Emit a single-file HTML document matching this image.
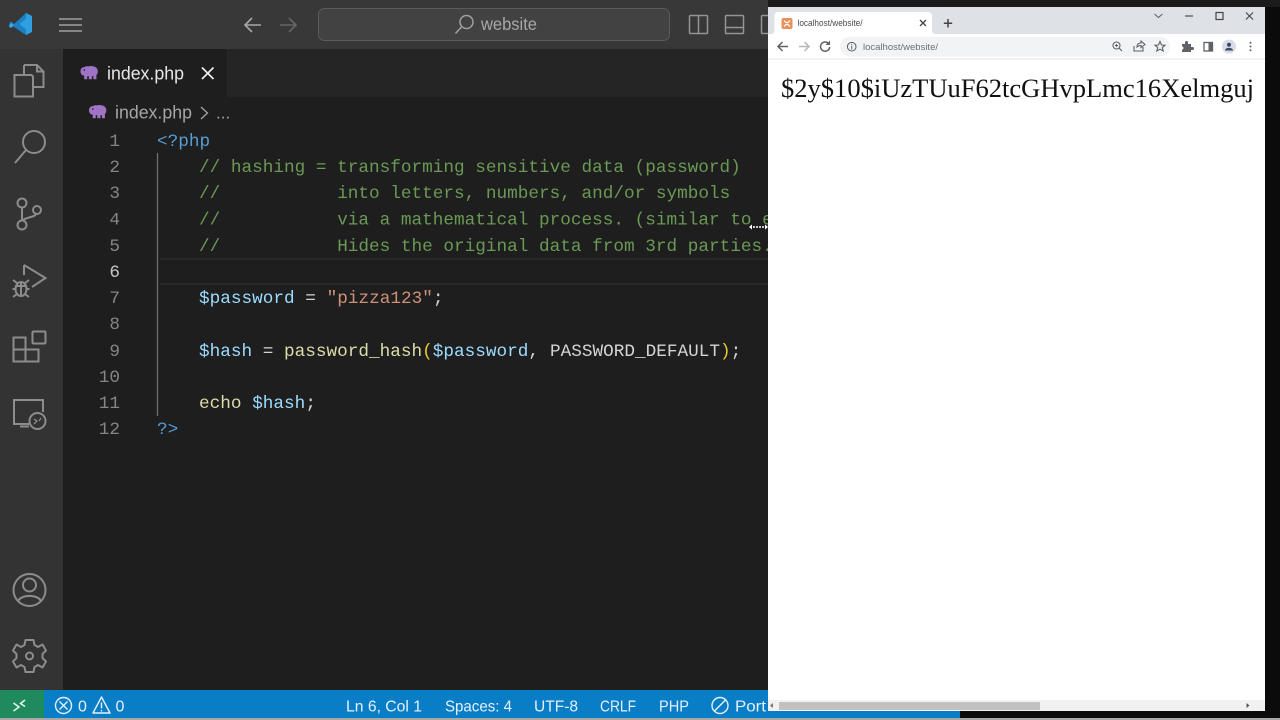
<!DOCTYPE html>
<html lang="en"><head><meta charset="utf-8"><title>index.php - website</title>
<style>
html,body{margin:0;padding:0;background:#000;width:1280px;height:720px;overflow:hidden}
svg{display:block}
.ui{font-family:"Liberation Sans",sans-serif}
.code{font-family:"Liberation Mono",monospace;font-size:17.72px}
.ln{font-family:"Liberation Mono",monospace;font-size:17.72px;fill:#858585;text-anchor:end}
.ic{fill:none;stroke:#8c8c8c;stroke-width:2}
.c{fill:#6a9955}.v{fill:#9cdcfe}.f{fill:#dcdcaa}.s{fill:#ce9178}.t{fill:#569cd6}.p{fill:#d4d4d4}.y{fill:#e8c92e}
.st{font-family:"Liberation Sans",sans-serif;font-size:16px;fill:#e4f1fa}
</style></head><body>
<svg width="1280" height="720" viewBox="0 0 1280 720" xmlns="http://www.w3.org/2000/svg">
<defs>
<g id="el"><path fill="#a074c4" d="M0 5.500C0 2.500 2 .8 4 1.200 5 .2 6.500 0 8 .4c1-.5 3-.7 5 0 3 .6 4.300 2.800 4.300 5.100 0 1.500-.5 2.700-1.400 3.500v4.200h-3v-3h-1.500v3H8.300v-3H6.700v3h-3V9.500C2.500 9.700 1.700 9.300 1.300 8.600.4 7.800 0 6.800 0 5.500z"/><circle cx="3.800" cy="4" r=".8" fill="#1e1e1e"/></g>
</defs>
<!-- base -->
<rect width="1280" height="720" fill="#0b0b0b"/>
<rect width="768" height="49" fill="#383838"/>
<rect x="768" width="512" height="7" fill="#1b1b1b"/>
<rect y="49" width="63" height="641" fill="#333"/>
<rect x="63" y="49" width="705" height="48" fill="#252526"/>
<rect x="63" y="49" width="164" height="48" fill="#1e1e1e"/>
<rect x="63" y="97" width="705" height="593" fill="#1e1e1e"/>
<rect y="690" width="960" height="28" fill="#0a7dc7"/>
<rect y="690" width="44" height="28" fill="#1f8a5b"/>
<rect y="718" width="1280" height="2" fill="#a8a8a8"/>

<!-- VS Code logo -->
<path fill="#2f9fe0" d="M26 13 32 16V32L26 35 15 25.200 26 13Z"/>
<path fill="#1d7fc4" d="M26 13 14 24 11 21.500 9 22.500 14 27 26 35 26 29.500 19.500 24 26 18.500Z"/>
<path fill="#3aa7e8" d="M9 26.500 11 28 14 25.200 11.500 23 9.500 24.200Z"/>
<!-- hamburger -->
<path stroke="#a0a0a0" stroke-width="1.600" fill="none" d="M59 19H82M59 25H82M59 31H82"/>
<!-- nav arrows -->
<path stroke="#a8a8a8" stroke-width="1.600" fill="none" d="M261 25H245M252 18l-7 7 7 7"/>
<path stroke="#666" stroke-width="1.600" fill="none" d="M280 25H296M289 18l7 7-7 7"/>
<!-- command center -->
<rect x="318.500" y="8.500" width="351" height="32" rx="6" fill="#424242" stroke="#5b5b5b"/>
<circle cx="466.500" cy="22" r="6.500" fill="none" stroke="#a0a0a0" stroke-width="1.500"/>
<path stroke="#a0a0a0" stroke-width="1.500" d="M461.500 27 455.500 33.500"/>
<text class="ui" x="481" y="30" font-size="17.500" fill="#a8a8a8" textLength="56" lengthAdjust="spacingAndGlyphs">website</text>
<!-- layout icons -->
<g fill="none" stroke="#949494" stroke-width="1.500">
<rect x="689.500" y="15.500" width="18" height="18" rx="1"/><path d="M698.500 15.500V33.500"/>
<rect x="725.500" y="15.500" width="18" height="18" rx="1"/><path d="M725.500 27.500H743.500"/>
<rect x="761.500" y="15.500" width="18" height="18" rx="1"/>
</g>

<!-- activity icons -->
<g class="ic">
<path d="M24 65H37L43.500 71.500V87H33M24 65V74M37 65V71.500H43.500"/>
<path d="M14.500 75H31.500L33 76.500V96.500H14.500Z"/>
<circle cx="34" cy="142" r="11"/><path d="M26 150 15 163"/>
<circle cx="22" cy="203" r="4.500"/><circle cx="22" cy="225" r="4.500"/><circle cx="37" cy="210" r="4"/>
<path d="M22 207.500V220.500M36 214C34 218 28 216 22.500 220.500"/>
<path d="M24 265 45.500 278 32 287M24 265V275"/>
<path d="M13 280 17 283M29 280 25 283M12.500 289H16M26 289H29.500M13 297 17 294M29 297 25 294"/>
<ellipse cx="21" cy="289" rx="5.500" ry="7"/><path d="M16 286H26M21 283V296"/>
<rect x="13.500" y="337.500" width="12" height="12"/><rect x="13.500" y="349.500" width="12" height="12"/><rect x="25.500" y="349.500" width="13" height="12"/>
<rect x="32.500" y="331.500" width="13" height="12" rx="1"/>
<path d="M29 424H14V400H43V412M20 426.500H29"/><circle cx="37.500" cy="421" r="8"/>
<path d="M34 424l3-3-3-2M41 418l-2 3" stroke-width="1.300"/>
<circle cx="29.500" cy="590" r="16"/><circle cx="29.500" cy="585" r="6.500"/><path d="M18 601.500C20 594 39 594 41 601.500"/>
<path d="M25.500 640H33.500L34.500 645 38 647 42.500 644.500 46 650.500 42.500 654V658L46 661.500 42.500 667.500 38 665 34.500 667 33.500 672H25.500L24.500 667 21 665 16.500 667.500 13 661.500 16.500 658V654L13 650.500 16.500 644.500 21 647 24.500 645Z" stroke-linejoin="round"/>
<circle cx="29.500" cy="656" r="3.500"/>
</g>

<!-- tab -->
<use href="#el" x="80.500" y="66"/>
<text class="ui" x="107" y="79.500" font-size="18" fill="#e6e6e6" textLength="77" lengthAdjust="spacingAndGlyphs">index.php</text>
<path stroke="#eee" stroke-width="1.700" d="M202 67.500 213.500 79M213.500 67.500 202 79"/>
<!-- breadcrumb -->
<use href="#el" x="89" y="105"/>
<text class="ui" x="115" y="118.500" font-size="18" fill="#a5a5a5" textLength="77" lengthAdjust="spacingAndGlyphs">index.php</text>
<path stroke="#a5a5a5" stroke-width="1.300" fill="none" d="M201 107 207.500 113 201 119"/>
<text class="ui" x="216" y="118.500" font-size="17" fill="#a5a5a5">...</text>

<!-- current line and indent guide -->
<path stroke="#282828" stroke-width="2" d="M160 259H768M160 284H768"/>
<path stroke="#6e6e6e" stroke-width="1.300" d="M157.500 153V416"/>

<!-- line numbers -->
<text class="ln" x="120" y="146">1</text>
<text class="ln" x="120" y="172">2</text>
<text class="ln" x="120" y="198">3</text>
<text class="ln" x="120" y="224.500">4</text>
<text class="ln" x="120" y="251">5</text>
<text class="ln" x="120" y="277" style="fill:#c6c6c6">6</text>
<text class="ln" x="120" y="303">7</text>
<text class="ln" x="120" y="329">8</text>
<text class="ln" x="120" y="356">9</text>
<text class="ln" x="120" y="382">10</text>
<text class="ln" x="120" y="408">11</text>
<text class="ln" x="120" y="434">12</text>

<!-- code -->
<g class="code">
<text x="157" y="146" class="t">&lt;?php</text>
<text x="199" y="172" class="c">// hashing = transforming sensitive data (password)</text>
<text y="198" class="c"><tspan x="199">//</tspan><tspan x="337.200">into letters, numbers, and/or symbols</tspan></text>
<text y="224.500" class="c"><tspan x="199">//</tspan><tspan x="337.200">via a mathematical process. (similar to encryption)</tspan></text>
<text y="251" class="c"><tspan x="199">//</tspan><tspan x="337.200">Hides the original data from 3rd parties.</tspan></text>
<text y="303"><tspan x="199" class="v">$password</tspan><tspan x="305.300" class="p">=</tspan><tspan x="326.600" class="s">"pizza123"</tspan><tspan class="p">;</tspan></text>
<text y="356"><tspan x="199" class="v">$hash</tspan><tspan x="262.800" class="p">=</tspan><tspan x="284" class="f">password_hash</tspan><tspan class="y">(</tspan><tspan class="v">$password</tspan><tspan class="p">,</tspan><tspan x="550" class="p">PASSWORD_DEFAULT</tspan><tspan class="y">)</tspan><tspan class="p">;</tspan></text>
<text y="408"><tspan x="199" class="f">echo</tspan><tspan x="252.200" class="v">$hash</tspan><tspan class="p">;</tspan></text>
<text x="157" y="434" class="t">?&gt;</text>
</g>

<!-- status bar -->
<path stroke="#e8f4ec" stroke-width="1.500" fill="none" d="M13.500 703 19 707 13.500 711M25 700 20.500 703.500 25 706.500"/>
<g fill="none" stroke="#e4f1fa" stroke-width="1.400">
<circle cx="63.500" cy="705.500" r="8"/><path d="M59.500 701.500 67.500 709.500M67.500 701.500 59.500 709.500"/>
<path d="M101.500 697 110 713H93Z" stroke-linejoin="round"/><path d="M101.500 702.500V708.500M101.500 710V711.500"/>
<circle cx="720" cy="705.500" r="8"/><path d="M714.500 711 725.500 700"/>
</g>
<text class="st" x="78" y="711.500">0</text>
<text class="st" x="115.500" y="711.500">0</text>
<text class="st" x="346" y="711.500" textLength="76" lengthAdjust="spacingAndGlyphs">Ln 6, Col 1</text>
<text class="st" x="445" y="711.500" textLength="67" lengthAdjust="spacingAndGlyphs">Spaces: 4</text>
<text class="st" x="534" y="711.500" textLength="44" lengthAdjust="spacingAndGlyphs">UTF-8</text>
<text class="st" x="600" y="711.500" textLength="36" lengthAdjust="spacingAndGlyphs">CRLF</text>
<text class="st" x="659" y="711.500" textLength="30" lengthAdjust="spacingAndGlyphs">PHP</text>
<text class="st" x="735" y="711.500" textLength="31" lengthAdjust="spacingAndGlyphs">Port</text>

<!-- browser window -->
<rect x="768" y="7" width="497" height="704" fill="#fff"/>
<rect x="768" y="7" width="497" height="27" fill="#dee1e6"/>
<path fill="#fff" d="M771 34C774 34 774.500 32 774.500 30V16C774.500 13.500 776 12 778.500 12H928C930.500 12 932 13.500 932 16V30C932 32 932.500 34 935 34Z"/>
<rect x="768" y="34" width="497" height="25" fill="#fff"/>
<rect x="768" y="58.500" width="497" height="1" fill="#e6e6e6"/>
<rect x="781.500" y="18" width="11" height="11" rx="2" fill="#e9905a"/>
<path stroke="#fff" stroke-width="1.200" fill="none" d="M784 20.500 786 22.500H788L790 20.500M784 26.500 786 24.500H788L790 26.500"/>
<text class="ui" x="797.500" y="26" font-size="9" fill="#4a4a4a" textLength="65" lengthAdjust="spacingAndGlyphs">localhost/website/</text>
<path stroke="#444" stroke-width="1.300" d="M920 20 926 26M926 20 920 26"/>
<path stroke="#444" stroke-width="1.500" d="M948 19V27.500M943.800 23.300H952.200"/>
<path stroke="#666" stroke-width="1.100" fill="none" d="M1154.500 14 1158.500 17.500 1162.500 14"/>
<path stroke="#444" stroke-width="1.100" fill="none" d="M1185 16H1193"/>
<rect x="1216" y="12.500" width="7" height="7" fill="none" stroke="#444" stroke-width="1.200"/>
<path stroke="#444" stroke-width="1.100" d="M1246 12.500 1253 19.500M1253 12.500 1246 19.500"/>
<!-- toolbar -->
<path stroke="#5f6368" stroke-width="1.500" fill="none" d="M788 46.500H778.500M782.500 42 778 46.500 782.500 51"/>
<path stroke="#b4b7bb" stroke-width="1.500" fill="none" d="M799 46.500H808.500M804.500 42 809 46.500 804.500 51"/>
<path stroke="#5f6368" stroke-width="1.500" fill="none" d="M828.500 43.500A4.600 4.600 0 1 0 829.700 47"/>
<path fill="#5f6368" d="M830 40.500V45H825.500Z"/>
<rect x="840" y="37" width="330" height="19.500" rx="9.700" fill="#f1f3f4"/>
<circle cx="851.700" cy="46.700" r="4.300" fill="none" stroke="#5f6368" stroke-width="1"/>
<path stroke="#5f6368" d="M851.700 45.800V49.500M851.700 43.800V44.900"/>
<text class="ui" x="863" y="50" font-size="9.300" fill="#6c6f73" textLength="75" lengthAdjust="spacingAndGlyphs">localhost/website/</text>
<g fill="none" stroke="#5f6368" stroke-width="1.100">
<circle cx="1116.500" cy="45.500" r="3.500"/><path d="M1119 48 1122 51M1115 45.500H1118M1116.500 44V47"/>
<path d="M1134 46V51H1143V47M1137 47C1137 44 1139 43 1141 43V41L1145 44.500 1141 47.500V45.500C1139.500 45.500 1138 46 1137 47Z"/>
<path d="M1160 41.500 1161.500 45 1165 45.300 1162.300 47.600 1163.200 51 1160 49.200 1156.800 51 1157.700 47.600 1155 45.300 1158.500 45Z"/>
</g>
<path fill="#5f6368" d="M1182 44H1185V42.500A1.500 1.500 0 0 1 1188 42.500V44H1191V47H1192.500A1.500 1.500 0 0 1 1192.500 50H1191V52H1182V49.500A1.500 1.500 0 0 0 1182 46.500Z"/>
<rect x="1204" y="42.500" width="8.500" height="8.500" fill="none" stroke="#5f6368" stroke-width="1.300"/><rect x="1208.500" y="42.500" width="4" height="8.500" fill="#5f6368"/>
<circle cx="1229" cy="46.500" r="7" fill="#d7dce8"/>
<circle cx="1229" cy="44.800" r="2" fill="#3c4a63"/><path fill="#3c4a63" d="M1225 50.500C1225 47 1233 47 1233 50.500Z"/>
<g fill="#5f6368"><circle cx="1250.500" cy="42.800" r="1"/><circle cx="1250.500" cy="46.500" r="1"/><circle cx="1250.500" cy="50.200" r="1"/></g>
<!-- page content -->
<text x="781" y="97" font-family="'Liberation Serif',serif" font-size="26.700" fill="#111" textLength="473" lengthAdjust="spacingAndGlyphs">$2y$10$iUzTUuF62tcGHvpLmc16Xelmguj</text>
<!-- scrollbar -->
<rect x="768" y="700" width="497" height="11" fill="#f1f1f1"/>
<rect x="779" y="702" width="261" height="8" fill="#c1c1c1"/>
<path fill="#777" d="M773 703V708L770 705.500Z"/>
<path fill="#555" d="M1246.500 703V708L1249.500 705.500Z"/>
<!-- resize cursor -->
<path stroke="#fff" stroke-width="1.500" stroke-dasharray="2 1" d="M750 227H767"/>
<path fill="#fff" d="M749 227 752 224.500V229.500ZM768 227 765 224.500V229.500Z"/>
</svg>
</body></html>
